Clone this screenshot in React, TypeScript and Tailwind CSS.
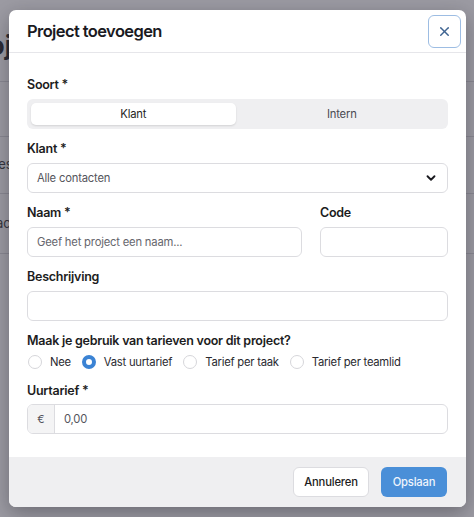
import { ChevronDown, X } from 'lucide-react'

function Label({ children }: { children: React.ReactNode }) {
  return <div className="h-4 text-[12.5px] leading-4 font-semibold tracking-[-0.25px] text-[#1c1c21] whitespace-nowrap">{children}</div>
}

function Radio({ label, checked }: { label: string; checked?: boolean }) {
  return (
    <label className="flex items-center gap-[8px] whitespace-nowrap">
      <span
        className={
          checked
            ? 'w-[14px] h-[14px] shrink-0 rounded-full border-[4px] border-[#3b83d4] bg-white'
            : 'w-[14px] h-[14px] shrink-0 rounded-full border border-[#d6d6da] bg-white'
        }
      />
      <span className="text-[11.25px] tracking-[-0.25px] text-[#2a2a30]">{label}</span>
    </label>
  )
}

export default function App() {
  return (
    <div className="relative w-[474px] h-[517px] overflow-hidden bg-white" style={{ fontFamily: 'Inter, "Noto Sans", sans-serif' }}>
      {/* page behind the dialog */}
      <div className="flex flex-col">
        <div className="h-[82px] border-b border-[#d8d8dc] flex items-center">
          <div className="-ml-[38px] text-[26px] font-bold text-[#1c1c21] mt-[10px]">Proje</div>
        </div>
        <div className="h-[55px] border-b border-[#d8d8dc]" />
        <div className="h-[57px] border-b border-[#d8d8dc] flex items-center">
          <span className="-ml-[6px] text-[13px] text-[#333]">tes</span>
        </div>
        <div className="h-[60px] border-b border-[#d8d8dc] flex items-center">
          <span className="-ml-[4px] text-[13px] text-[#333]">ac</span>
        </div>
      </div>

      {/* overlay */}
      <div className="absolute inset-0 bg-[#3a3848]/50" />

      {/* dialog */}
      <div className="absolute left-[9px] top-[10px] w-[457px] h-[497px] bg-white rounded-[7px] shadow-[0_6px_20px_rgba(20,20,30,0.35)] flex flex-col overflow-hidden">
        <div className="h-[43px] shrink-0 border-b border-[#e6e6ea] flex items-center justify-between pl-[18px] pr-[5px]">
          <h2 className="text-[16.5px] font-semibold text-[#1a1a1f] tracking-[-0.6px]">Project toevoegen</h2>
          <button className="w-[33px] h-[33px] mt-[1px] rounded-[6px] border-[1.5px] border-[#9dbde3] flex items-center justify-center text-[#3f6491]">
            <X size={15} strokeWidth={2.4} />
          </button>
        </div>

        <div className="flex-1 px-[18px] pt-[24px] flex flex-col gap-[12px]">
          <div className="flex flex-col gap-[6px]">
            <Label>Soort *</Label>
            <div className="h-[30px] rounded-[6px] bg-[#efeff1] p-[4px] grid grid-cols-2 gap-[4px]">
              <div className="rounded-[5px] bg-white shadow-[0_1px_2px_rgba(0,0,0,0.12)] flex items-center justify-center text-[11.25px] tracking-[-0.2px] text-[#1f1f24]">Klant</div>
              <div className="flex items-center justify-center text-[11.25px] tracking-[-0.2px] text-[#4a4a52]">Intern</div>
            </div>
          </div>

          <div className="flex flex-col gap-[6px]">
            <Label>Klant *</Label>
            <div className="h-[30px] rounded-[6px] border border-[#dcdce0] flex items-center justify-between pl-[9px] pr-[9px]">
              <span className="text-[11.25px] tracking-[-0.2px] text-[#55555c]">Alle contacten</span>
              <ChevronDown size={14} strokeWidth={3.2} className="text-[#1a1a1f]" />
            </div>
          </div>

          <div className="grid grid-cols-[1fr_128px] gap-[18px]">
            <div className="flex flex-col gap-[6px]">
              <Label>Naam *</Label>
              <div className="h-[30px] rounded-[6px] border border-[#dcdce0] flex items-center pl-[9px]">
                <span className="text-[11.25px] tracking-[-0.2px] text-[#66666d]">Geef het project een naam...</span>
              </div>
            </div>
            <div className="flex flex-col gap-[6px]">
              <Label>Code</Label>
              <div className="h-[30px] rounded-[6px] border border-[#dcdce0]" />
            </div>
          </div>

          <div className="flex flex-col gap-[6px]">
            <Label>Beschrijving</Label>
            <div className="h-[30px] rounded-[6px] border border-[#dcdce0]" />
          </div>

          <div className="flex flex-col gap-[5px]">
            <Label>Maak je gebruik van tarieven voor dit project?</Label>
            <div className="h-[16px] flex items-center gap-[11px] pl-[1px]">
              <Radio label="Nee" />
              <Radio label="Vast uurtarief" checked />
              <Radio label="Tarief per taak" />
              <Radio label="Tarief per teamlid" />
            </div>
          </div>

          <div className="flex flex-col gap-[5px] mt-[1px]">
            <Label>Uurtarief *</Label>
            <div className="h-[30px] rounded-[6px] border border-[#dcdce0] flex overflow-hidden">
              <div className="w-[27px] bg-[#f4f4f5] border-r border-[#dcdce0] flex items-center justify-center text-[11px] text-[#55555c]">€</div>
              <div className="flex-1 flex items-center pl-[9px] text-[11.25px] tracking-[-0.2px] text-[#55555c]">0,00</div>
            </div>
          </div>
        </div>

        <div className="h-[50px] shrink-0 bg-[#efeff1] flex items-center justify-end gap-[12px] pr-[19px]">
          <button className="h-[30px] w-[76px] rounded-[6px] bg-white border border-[#dcdce0] text-[11.25px] font-medium tracking-[-0.2px] text-[#1c1c21]">Annuleren</button>
          <button className="h-[30px] w-[66px] rounded-[6px] bg-[#4a8fd8] text-[11.25px] font-medium tracking-[-0.2px] text-[#eef4fc]">Opslaan</button>
        </div>
      </div>
    </div>
  )
}
